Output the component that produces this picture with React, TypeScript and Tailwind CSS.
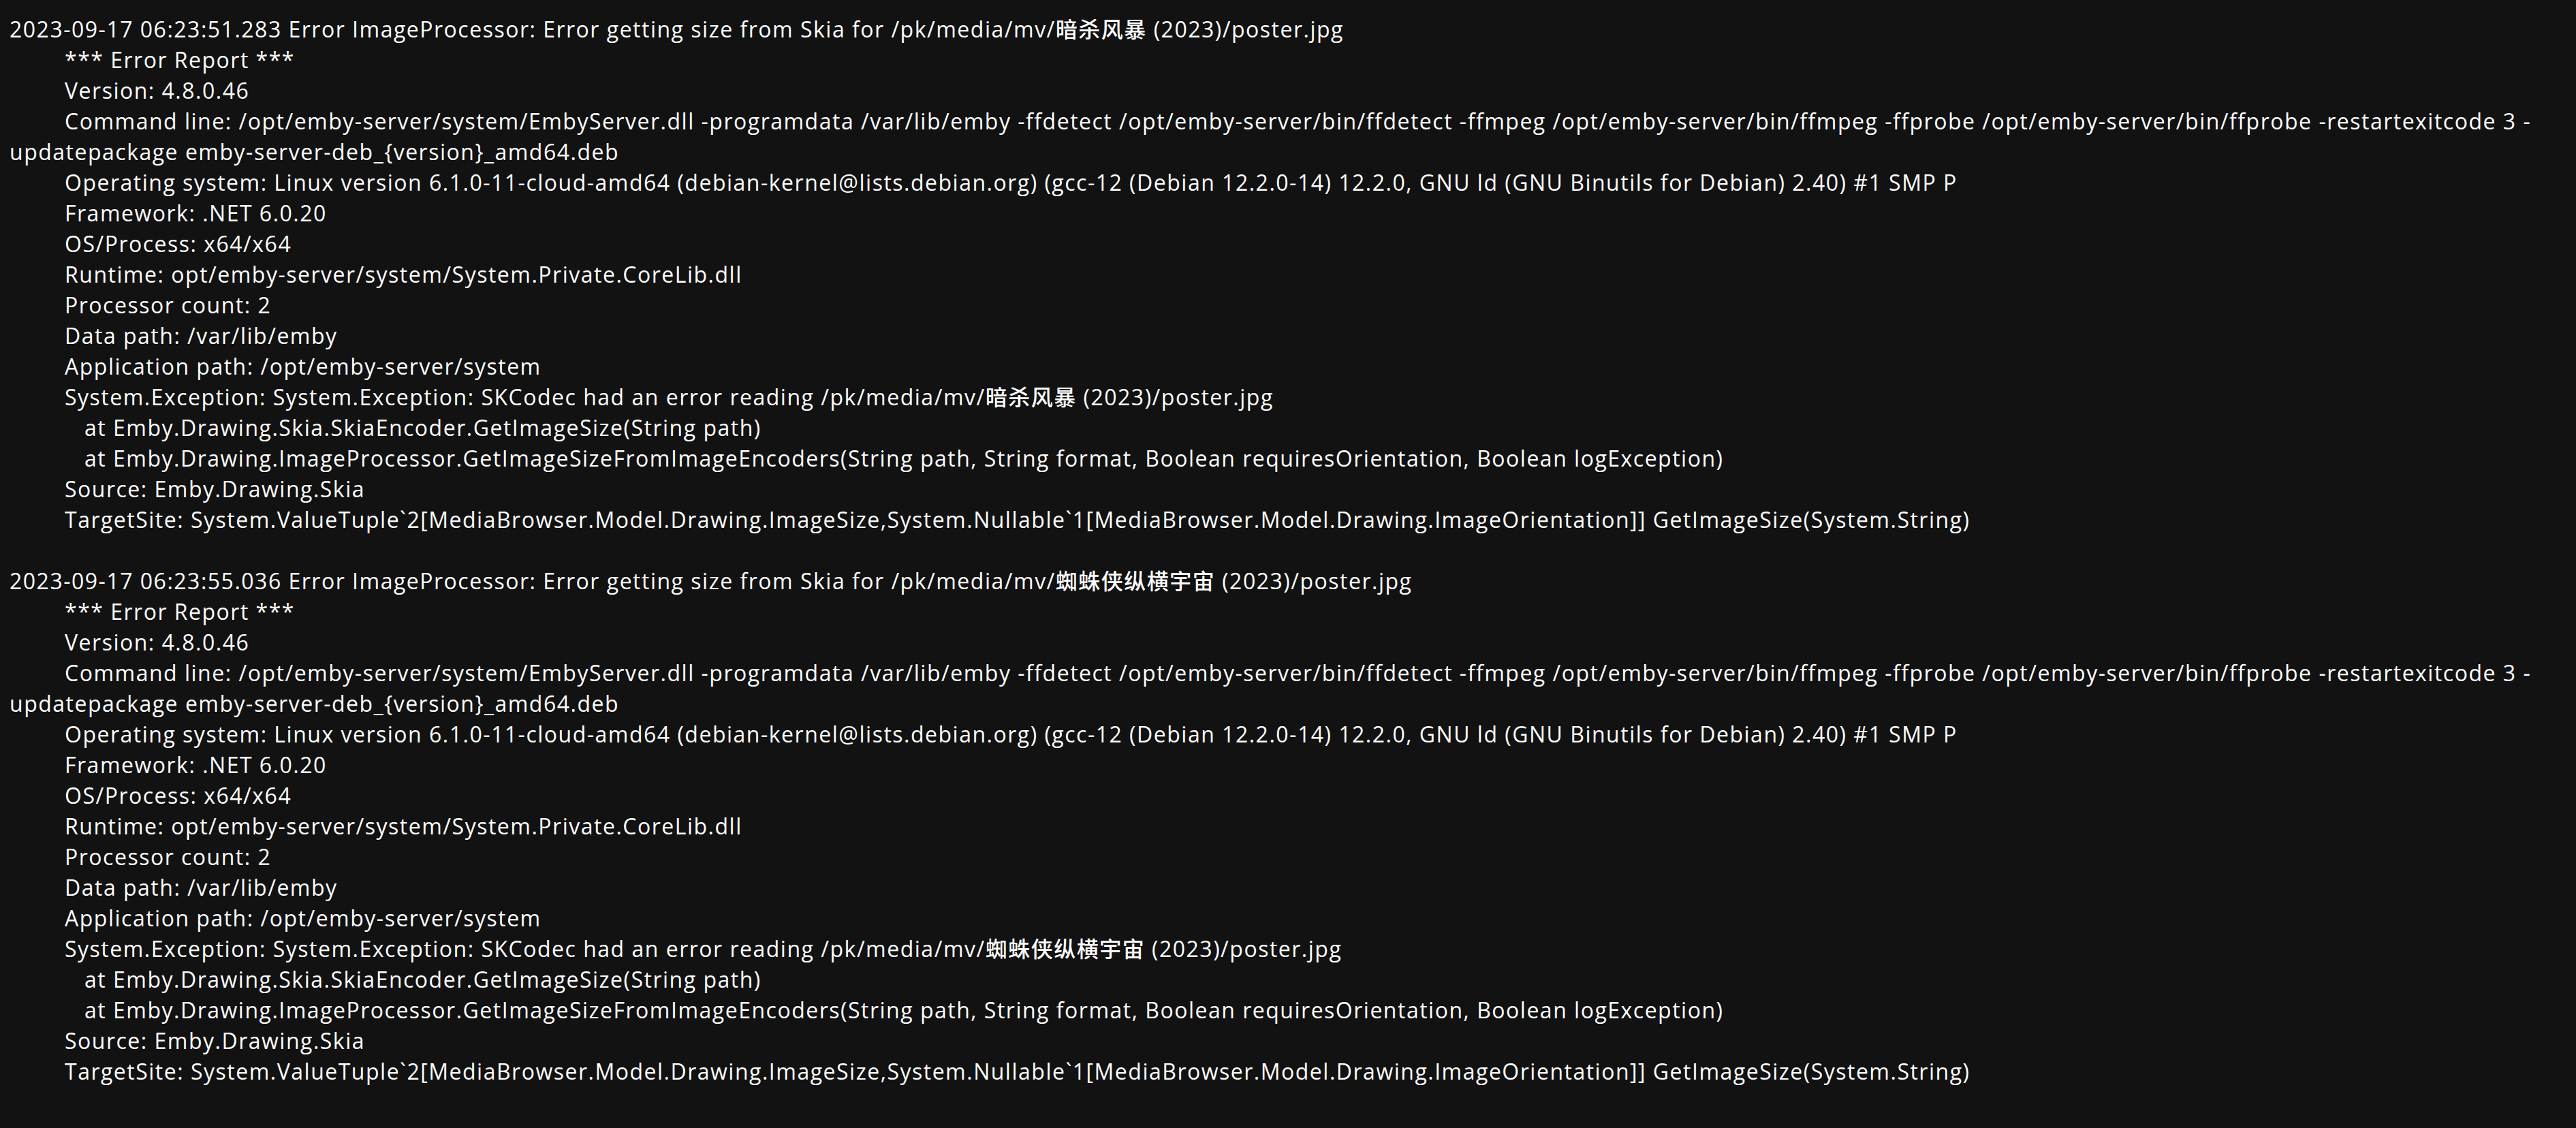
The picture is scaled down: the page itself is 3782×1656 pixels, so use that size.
import * as React from 'react'

type LogEntry = {
  time: string
  title: string
}

const entries: LogEntry[] = [
  { time: '2023-09-17 06:23:51.283', title: '暗杀风暴' },
  { time: '2023-09-17 06:23:55.036', title: '蜘蛛侠纵横宇宙' }
]

const cmd =
  'Command line: /opt/emby-server/system/EmbyServer.dll -programdata /var/lib/emby -ffdetect /opt/emby-server/bin/ffdetect -ffmpeg /opt/emby-server/bin/ffmpeg -ffprobe /opt/emby-server/bin/ffprobe -restartexitcode 3 -'

function Line({ indent = 0, children }: { indent?: 0 | 1 | 2; children: React.ReactNode }) {
  const pad = indent === 2 ? 'pl-[110px]' : indent === 1 ? 'pl-[81px]' : 'pl-0'
  return <div className={`h-[45px] leading-[45px] whitespace-pre ${pad}`}>{children}</div>
}

function Entry({ entry }: { entry: LogEntry }) {
  const path = `/pk/media/mv/${entry.title} (2023)/poster.jpg`
  return (
    <div>
      <Line>{entry.time} Error ImageProcessor: Error getting size from Skia for {path}</Line>
      <Line indent={1}>*** Error Report ***</Line>
      <Line indent={1}>Version: 4.8.0.46</Line>
      <Line indent={1}>{cmd}</Line>
      <Line>updatepackage emby-server-deb_{'{version}'}_amd64.deb</Line>
      <Line indent={1}>
        Operating system: Linux version 6.1.0-11-cloud-amd64 (debian-kernel@lists.debian.org) (gcc-12 (Debian 12.2.0-14) 12.2.0, GNU ld (GNU Binutils for Debian) 2.40) #1 SMP P
      </Line>
      <Line indent={1}>Framework: .NET 6.0.20</Line>
      <Line indent={1}>OS/Process: x64/x64</Line>
      <Line indent={1}>Runtime: opt/emby-server/system/System.Private.CoreLib.dll</Line>
      <Line indent={1}>Processor count: 2</Line>
      <Line indent={1}>Data path: /var/lib/emby</Line>
      <Line indent={1}>Application path: /opt/emby-server/system</Line>
      <Line indent={1}>System.Exception: System.Exception: SKCodec had an error reading {path}</Line>
      <Line indent={2}>at Emby.Drawing.Skia.SkiaEncoder.GetImageSize(String path)</Line>
      <Line indent={2}>
        at Emby.Drawing.ImageProcessor.GetImageSizeFromImageEncoders(String path, String format, Boolean requiresOrientation, Boolean logException)
      </Line>
      <Line indent={1}>Source: Emby.Drawing.Skia</Line>
      <Line indent={1}>
        TargetSite: System.ValueTuple`2[MediaBrowser.Model.Drawing.ImageSize,System.Nullable`1[MediaBrowser.Model.Drawing.ImageOrientation]] GetImageSize(System.String)
      </Line>
    </div>
  )
}

export default function App() {
  return (
    <div className="h-[1656px] w-full overflow-hidden bg-[#121212] text-white pt-[20px] pl-[14px] text-[32px] font-medium tracking-[1.5px] font-['Open_Sans','Noto_Sans_CJK_SC',sans-serif]">
      <div className="flex flex-col gap-[45px]">
        {entries.map(e => (
          <Entry key={e.time} entry={e} />
        ))}
      </div>
    </div>
  )
}
